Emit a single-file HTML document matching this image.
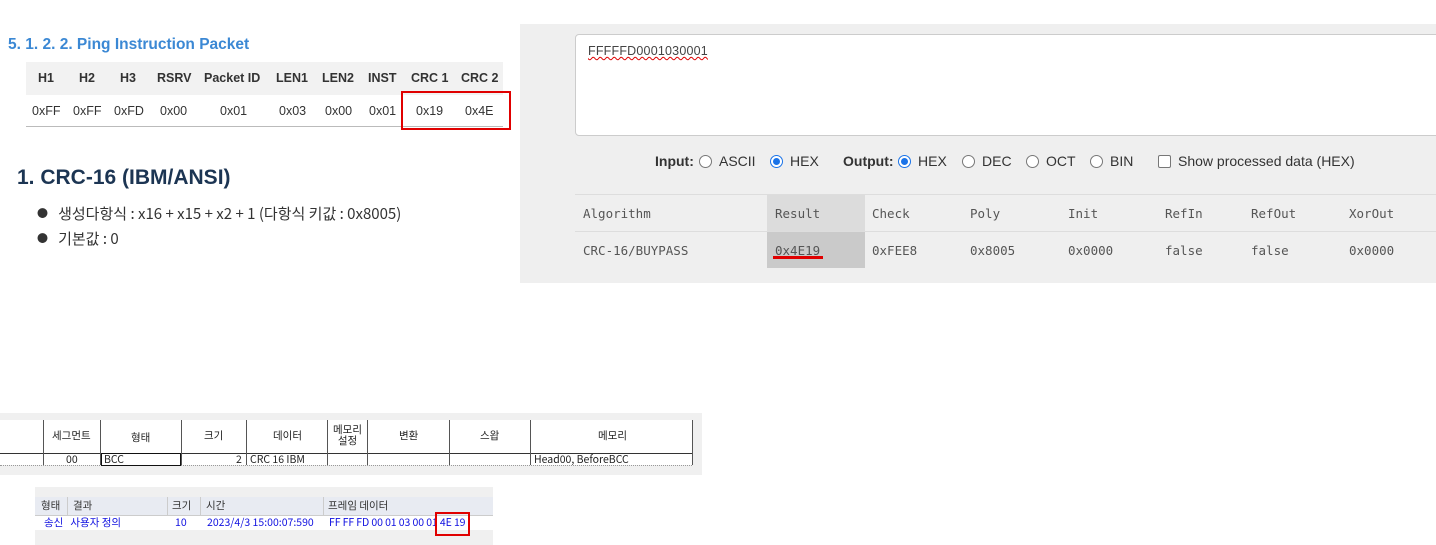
<!DOCTYPE html>
<html><head><meta charset="utf-8"><style>
body{margin:0;width:1436px;height:545px;background:#fff;position:relative;overflow:hidden;font-family:"Liberation Sans","Noto Sans CJK KR",sans-serif}
.a{position:absolute;white-space:nowrap}
.ko{font-family:"Noto Sans CJK KR","Liberation Sans",sans-serif}
.r{position:absolute;top:155px;width:11px;height:11px;border:1px solid #777;border-radius:50%;background:#fff}
.r.on{border-color:#1a73e8}
.r.on:after{content:"";position:absolute;left:2px;top:2px;width:7px;height:7px;border-radius:50%;background:#1a73e8}
.t{position:absolute;top:153px;font-size:14px;color:#333}
</style></head><body>
<div class="a" style="left:8px;top:36px;font-size:15.5px;font-weight:bold;color:#3b88d4">5. 1. 2. 2. Ping Instruction Packet</div>
<div class="a" style="left:26px;top:62px;width:477px;height:33px;background:#f2f2f2"></div>
<div class="a" style="left:26px;top:126px;width:477px;height:1px;background:#bbb"></div>
<div class="a" style="left:0;top:71px;font-size:12.5px;font-weight:bold;color:#333;width:520px;height:20px">
<span class="a" style="left:38px">H1</span><span class="a" style="left:79px">H2</span><span class="a" style="left:120px">H3</span><span class="a" style="left:157px">RSRV</span><span class="a" style="left:204px">Packet ID</span><span class="a" style="left:276px">LEN1</span><span class="a" style="left:322px">LEN2</span><span class="a" style="left:368px">INST</span><span class="a" style="left:411px">CRC 1</span><span class="a" style="left:461px">CRC 2</span></div>
<div class="a" style="left:0;top:104px;font-size:12.5px;color:#333;width:520px;height:20px">
<span class="a" style="left:32px">0xFF</span><span class="a" style="left:73px">0xFF</span><span class="a" style="left:114px">0xFD</span><span class="a" style="left:160px">0x00</span><span class="a" style="left:220px">0x01</span><span class="a" style="left:279px">0x03</span><span class="a" style="left:325px">0x00</span><span class="a" style="left:369px">0x01</span><span class="a" style="left:416px">0x19</span><span class="a" style="left:465px">0x4E</span></div>
<div class="a" style="left:401px;top:91px;width:106px;height:35px;border:2px solid #e00000"></div>
<div class="a" style="left:17px;top:166px;font-size:21px;font-weight:bold;color:#1c3553">1. CRC-16 (IBM/ANSI)</div>
<div class="a ko" style="left:37px;top:201px;font-size:15px;color:#333;line-height:24px"><span style="font-size:11px;vertical-align:2px">●</span>&nbsp;&nbsp;&nbsp;생성다항식 : x16 + x15 + x2 + 1 (다항식 키값 : 0x8005)<br><span style="font-size:11px;vertical-align:2px">●</span>&nbsp;&nbsp;&nbsp;기본값 : 0</div>

<div class="a" style="left:520px;top:24px;width:916px;height:259px;background:#efefef"></div>
<div class="a" style="left:575px;top:34px;width:870px;height:100px;background:#fff;border:1px solid #ccc;border-radius:4px"></div>
<div class="a" style="left:588px;top:44px;font-size:12.5px;color:#444;letter-spacing:0.2px;text-decoration:underline wavy #d00;text-decoration-thickness:1px">FFFFFD0001030001</div>
<span class="t" style="left:655px"><b>Input:</b></span>
<span class="r" style="left:699px"></span><span class="t" style="left:719px">ASCII</span>
<span class="r on" style="left:770px"></span><span class="t" style="left:790px">HEX</span>
<span class="t" style="left:843px"><b>Output:</b></span>
<span class="r on" style="left:898px"></span><span class="t" style="left:918px">HEX</span>
<span class="r" style="left:962px"></span><span class="t" style="left:982px">DEC</span>
<span class="r" style="left:1026px"></span><span class="t" style="left:1046px">OCT</span>
<span class="r" style="left:1090px"></span><span class="t" style="left:1110px">BIN</span>
<span class="r" style="left:1158px;border-radius:2px"></span><span class="t" style="left:1178px">Show processed data (HEX)</span>
<div class="a" style="left:575px;top:194px;width:861px;height:1px;background:#ddd"></div>
<div class="a" style="left:575px;top:231px;width:861px;height:1px;background:#ddd"></div>
<div class="a" style="left:767px;top:195px;width:98px;height:36px;background:#dcdcdc"></div>
<div class="a" style="left:767px;top:232px;width:98px;height:36px;background:#cacaca"></div>
<div class="a" style="left:773px;top:256px;width:50px;height:3px;background:#e00000"></div>
<div class="a" style="left:0;top:206px;font-family:'DejaVu Sans Mono','Liberation Mono',monospace;font-size:12.5px;color:#555;width:1436px;height:60px">
<span class="a" style="left:583px">Algorithm</span><span class="a" style="left:775px">Result</span><span class="a" style="left:872px">Check</span><span class="a" style="left:970px">Poly</span><span class="a" style="left:1068px">Init</span><span class="a" style="left:1165px">RefIn</span><span class="a" style="left:1251px">RefOut</span><span class="a" style="left:1349px">XorOut</span>
<span class="a" style="left:583px;top:37px">CRC-16/BUYPASS</span><span class="a" style="left:775px;top:37px">0x4E19</span><span class="a" style="left:872px;top:37px">0xFEE8</span><span class="a" style="left:970px;top:37px">0x8005</span><span class="a" style="left:1068px;top:37px">0x0000</span><span class="a" style="left:1165px;top:37px">false</span><span class="a" style="left:1251px;top:37px">false</span><span class="a" style="left:1349px;top:37px">0x0000</span></div>

<div class="a" style="left:0;top:413px;width:702px;height:62px;background:#f0f0f0"></div>
<div class="a" style="left:0;top:420px;width:692px;height:45px;background:#fff;border-right:1px solid #555"></div>
<div class="a" style="left:0;top:453px;width:692px;height:1px;background:#333"></div>
<div class="a" style="left:0;top:465px;width:692px;height:1px;border-top:1px dotted #999"></div>
<div class="a ko" style="left:0;top:420px;width:702px;height:46px;font-size:10.5px;line-height:12px;color:#222">
<div class="a" style="left:43px;top:0;width:1px;height:45px;background:#555"></div>
<div class="a" style="left:100px;top:0;width:1px;height:45px;background:#555"></div>
<div class="a" style="left:181px;top:0;width:1px;height:45px;background:#555"></div>
<div class="a" style="left:246px;top:0;width:1px;height:45px;background:#555"></div>
<div class="a" style="left:327px;top:0;width:1px;height:45px;background:#555"></div>
<div class="a" style="left:367px;top:0;width:1px;height:45px;background:#555"></div>
<div class="a" style="left:449px;top:0;width:1px;height:45px;background:#555"></div>
<div class="a" style="left:530px;top:0;width:1px;height:45px;background:#555"></div>
<span class="a" style="left:52px;top:10px">세그먼트</span><span class="a" style="left:131px;top:12px">형태</span><span class="a" style="left:204px;top:10px">크기</span><span class="a" style="left:273px;top:10px">데이터</span><span class="a" style="left:333px;top:4px;line-height:11px;text-align:center">메모리<br>설정</span><span class="a" style="left:399px;top:10px">변환</span><span class="a" style="left:480px;top:10px">스왑</span><span class="a" style="left:598px;top:10px">메모리</span>
<span class="a" style="left:66px;top:34px">00</span>
<div class="a" style="left:101px;top:33px;width:78px;height:11px;border:1px solid #111"></div>
<span class="a" style="left:104px;top:34px">BCC</span><span class="a" style="left:236px;top:34px">2</span><span class="a" style="left:250px;top:34px">CRC 16 IBM</span><span class="a" style="left:534px;top:34px">Head00, BeforeBCC</span>
</div>

<div class="a" style="left:35px;top:487px;width:458px;height:58px;background:#f0f0f0"></div>
<div class="a" style="left:35px;top:497px;width:458px;height:18px;background:#e8ebf2;border-bottom:1px solid #ccc"></div>
<div class="a" style="left:35px;top:516px;width:458px;height:14px;background:#fff"></div>
<div class="a ko" style="left:0;top:497px;width:500px;height:40px;font-size:10.5px;line-height:14px;color:#333">
<div class="a" style="left:67px;top:0;width:1px;height:18px;background:#ccc"></div>
<div class="a" style="left:167px;top:0;width:1px;height:18px;background:#ccc"></div>
<div class="a" style="left:200px;top:0;width:1px;height:18px;background:#ccc"></div>
<div class="a" style="left:323px;top:0;width:1px;height:18px;background:#ccc"></div>
<span class="a" style="left:41px;top:2px">형태</span><span class="a" style="left:73px;top:2px">결과</span><span class="a" style="left:172px;top:2px">크기</span><span class="a" style="left:206px;top:2px">시간</span><span class="a" style="left:328px;top:2px">프레임 데이터</span>
<span class="a" style="left:44px;top:19px;color:#1010e0">송신 &nbsp;&nbsp;사용자 정의</span><span class="a" style="left:175px;top:19px;color:#1010e0">10</span><span class="a" style="left:207px;top:19px;color:#1010e0">2023/4/3 15:00:07:590</span><span class="a" style="left:329px;top:19px;color:#1010e0;letter-spacing:-0.1px">FF FF FD 00 01 03 00 01 4E 19</span>
</div>
<div class="a" style="left:435px;top:512px;width:31px;height:20px;border:2px solid #e00000"></div>
</body></html>
